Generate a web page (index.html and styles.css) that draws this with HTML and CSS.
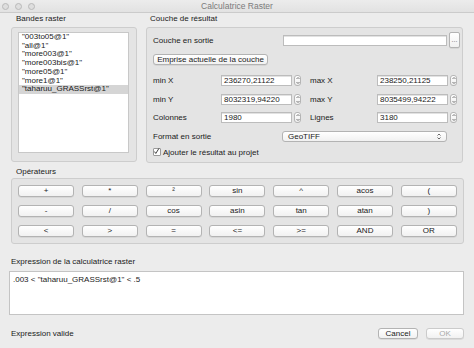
FILE: index.html
```html
<!DOCTYPE html>
<html lang="fr">
<head>
    <meta charset="UTF-8">
    <title>Calculatrice Raster</title>
    <link rel="stylesheet" href="styles.css">
</head>
<body>

<div class="titlebar">
    <div class="lights">
        <span class="light"></span>
        <span class="light"></span>
        <span class="light"></span>
    </div>
    <div class="title">Calculatrice Raster</div>
</div>

<div class="content">
    <div class="top">
        <!-- Bandes raster -->
        <section class="group bands">
            <div class="group-title">Bandes raster</div>
            <div class="group-box">
                <ul class="band-list">
                    <li>"003to05@1"</li>
                    <li>"all@1"</li>
                    <li>"more003@1"</li>
                    <li>"more003bis@1"</li>
                    <li>"more05@1"</li>
                    <li>"more1@1"</li>
                    <li class="selected">"taharuu_GRASSrst@1"</li>
                </ul>
            </div>
        </section>

        <!-- Couche de résultat -->
        <section class="group result">
            <div class="group-title">Couche de résultat</div>
            <div class="group-box">
                <div class="out-row">
                    <span class="lbl">Couche en sortie</span>
                    <span class="field out-field"></span>
                    <button class="btn dots">...</button>
                </div>
                <button class="btn extent">Emprise actuelle de la couche</button>

                <div class="num-row first">
                    <span class="lbl">min X</span>
                    <span class="field num">236270,21122</span>
                    <span class="spin"><svg width="6" height="11" viewBox="0 0 6 11"><path d="M1.5 4 L3 2.5 L4.5 4 M1.5 7 L3 8.5 L4.5 7" fill="none" stroke="#555" stroke-width="0.8"/></svg></span>
                    <span class="lbl lbl2">max X</span>
                    <span class="field num">238250,21125</span>
                    <span class="spin"><svg width="6" height="11" viewBox="0 0 6 11"><path d="M1.5 4 L3 2.5 L4.5 4 M1.5 7 L3 8.5 L4.5 7" fill="none" stroke="#555" stroke-width="0.8"/></svg></span>
                </div>
                <div class="num-row">
                    <span class="lbl">min Y</span>
                    <span class="field num">8032319,94220</span>
                    <span class="spin"><svg width="6" height="11" viewBox="0 0 6 11"><path d="M1.5 4 L3 2.5 L4.5 4 M1.5 7 L3 8.5 L4.5 7" fill="none" stroke="#555" stroke-width="0.8"/></svg></span>
                    <span class="lbl lbl2">max Y</span>
                    <span class="field num">8035499,94222</span>
                    <span class="spin"><svg width="6" height="11" viewBox="0 0 6 11"><path d="M1.5 4 L3 2.5 L4.5 4 M1.5 7 L3 8.5 L4.5 7" fill="none" stroke="#555" stroke-width="0.8"/></svg></span>
                </div>
                <div class="num-row">
                    <span class="lbl">Colonnes</span>
                    <span class="field num">1980</span>
                    <span class="spin"><svg width="6" height="11" viewBox="0 0 6 11"><path d="M1.5 4 L3 2.5 L4.5 4 M1.5 7 L3 8.5 L4.5 7" fill="none" stroke="#555" stroke-width="0.8"/></svg></span>
                    <span class="lbl lbl2">Lignes</span>
                    <span class="field num">3180</span>
                    <span class="spin"><svg width="6" height="11" viewBox="0 0 6 11"><path d="M1.5 4 L3 2.5 L4.5 4 M1.5 7 L3 8.5 L4.5 7" fill="none" stroke="#555" stroke-width="0.8"/></svg></span>
                </div>

                <div class="format-row">
                    <span class="lbl fmt-lbl">Format en sortie</span>
                    <span class="combo">
                        GeoTIFF
                        <svg width="6" height="9" viewBox="0 0 6 9"><path d="M1.5 3.5 L3 2 L4.5 3.5 M1.5 5.5 L3 7 L4.5 5.5" fill="none" stroke="#444" stroke-width="0.8"/></svg>
                    </span>
                </div>

                <div class="check-row">
                    <span class="checkbox"><svg width="9" height="9" viewBox="0 0 9 9"><path d="M1.8 4.6 L3.6 7 L7.6 0.6" fill="none" stroke="#222" stroke-width="1.1"/></svg></span>
                    <span>Ajouter le résultat au projet</span>
                </div>
            </div>
        </section>
    </div>

    <!-- Opérateurs -->
    <section class="group ops">
        <div class="group-title">Opérateurs</div>
        <div class="group-box ops-grid">
            <button class="btn op">+</button>
            <button class="btn op">*</button>
            <button class="btn op">²</button>
            <button class="btn op">sin</button>
            <button class="btn op">^</button>
            <button class="btn op">acos</button>
            <button class="btn op">(</button>
            <button class="btn op">-</button>
            <button class="btn op">/</button>
            <button class="btn op">cos</button>
            <button class="btn op">asin</button>
            <button class="btn op">tan</button>
            <button class="btn op">atan</button>
            <button class="btn op">)</button>
            <button class="btn op">&lt;</button>
            <button class="btn op">&gt;</button>
            <button class="btn op">=</button>
            <button class="btn op">&lt;=</button>
            <button class="btn op">&gt;=</button>
            <button class="btn op">AND</button>
            <button class="btn op">OR</button>
        </div>
    </section>

    <!-- Expression -->
    <section class="expr">
        <div class="expr-title">Expression de la calculatrice raster</div>
        <div class="expr-box">.003 &lt; "taharuu_GRASSrst@1" &lt; .5</div>
    </section>

    <div class="footer">
        <span class="status">Expression valide</span>
        <div class="actions">
            <button class="btn cancel">Cancel</button>
            <button class="btn ok" disabled>OK</button>
        </div>
    </div>
</div>

</body>
</html>
```

FILE: styles.css
```css
body {
    margin: 0;
    background-color: #ececec;
    font-family: 'Liberation Sans', Arial, sans-serif;
    font-size: 8px;
    color: #1a1a1a;
    width: 474px;
    height: 348px;
    overflow: hidden;
}

/* Title bar */
.titlebar {
    position: relative;
    height: 12px;
    border-bottom: 1px solid #cbcbcb;
    background: linear-gradient(#ececec, #e2e2e2);
    display: flex;
    align-items: center;
    justify-content: center;
}

.lights {
    position: absolute;
    left: 2px;
    top: 3px;
    display: flex;
    gap: 6px;
}

.light {
    width: 5px;
    height: 5px;
    border-radius: 50%;
    border: 1px solid #b9b9b9;
    background-color: #dedede;
}

.title {
    color: #7b7b7b;
    font-size: 8.5px;
}

.content {
    padding: 1px 10px 0 11px;
}

/* Group boxes */
.top {
    display: flex;
    gap: 9px;
}

.group-title {
    line-height: 10px;
    padding-left: 5px;
    margin-bottom: 3px;
}

.group-box {
    border: 1px solid #cdcdcd;
    border-radius: 3px;
    background-color: #e4e4e4;
    box-sizing: border-box;
}

.bands {
    width: 126px;
}

.bands .group-box {
    height: 135px;
    padding: 4px 7px 6px 6px;
}

.band-list {
    list-style: none;
    margin: 0;
    padding: 0;
    height: 121px;
    background-color: white;
    border: 1px solid #c8c8c8;
    box-sizing: border-box;
}

.band-list li {
    line-height: 8.7px;
    padding-left: 3px;
}

.band-list li.selected {
    background-color: #d5d5d5;
}

.result {
    width: 317px;
}

.result .group-title {
    padding-left: 4px;
}

.result .group-box {
    height: 136px;
    padding: 4px 0 0 6px;
}

.lbl {
    display: inline-block;
    width: 68px;
}

.field {
    display: inline-block;
    box-sizing: border-box;
    height: 11px;
    line-height: 9px;
    background-color: white;
    border: 1px solid #bcbcbc;
    box-shadow: inset 0 1px 0 #e2e2e2;
    padding-left: 2px;
}

.out-row {
    display: flex;
    align-items: center;
    height: 16px;
}

.out-row .lbl {
    width: 130px;
}

.out-field {
    width: 164px;
}

.btn {
    font-family: 'Liberation Sans', Arial, sans-serif;
    font-size: 8px;
    color: #1a1a1a;
    background: linear-gradient(#ffffff, #f1f1f1);
    border: 1px solid #b3b3b3;
    border-radius: 3px;
    padding: 0;
    box-sizing: border-box;
    box-shadow: 0 0.5px 0 #c8c8c8;
}

.dots {
    width: 11px;
    height: 16px;
    margin-left: 2px;
    border-radius: 2px;
    font-size: 7px;
    color: #666;
    line-height: 12px;
}

.extent {
    display: block;
    width: 115px;
    height: 11px;
    margin-top: 6px;
    line-height: 9px;
}

.num-row {
    display: flex;
    align-items: center;
    height: 11px;
    margin-top: 7.5px;
}

.num-row.first {
    margin-top: 10px;
}

.num {
    width: 71px;
}

.spin {
    display: inline-flex;
    box-sizing: border-box;
    width: 7px;
    height: 11px;
    margin-left: 2px;
    border: 1px solid #b5b5b5;
    border-radius: 3px;
    background: linear-gradient(#ffffff, #eeeeee);
    align-items: center;
    justify-content: center;
}

.spin svg {
    flex: none;
}

.lbl2 {
    width: 67px;
    margin-left: 9px;
}

.format-row {
    display: flex;
    align-items: center;
    height: 11px;
    margin-top: 8px;
}

.fmt-lbl {
    width: 129px;
}

.combo {
    display: flex;
    align-items: center;
    justify-content: space-between;
    box-sizing: border-box;
    width: 165px;
    height: 11px;
    padding: 0 4px 0 5px;
    background: linear-gradient(#ffffff, #f1f1f1);
    border: 1px solid #b3b3b3;
    border-radius: 3px;
}

.check-row {
    display: flex;
    align-items: center;
    gap: 2px;
    height: 10px;
    margin-top: 5px;
}

.checkbox {
    display: inline-flex;
    box-sizing: border-box;
    width: 8px;
    height: 8px;
    border: 1px solid #9a9a9a;
    border-radius: 1px;
    background-color: white;
    overflow: visible;
}

.checkbox svg {
    margin: -2px 0 0 -1px;
}

/* Operators */
.ops {
    margin-top: 4px;
    width: 453px;
}

.ops .group-title {
    margin-bottom: 1px;
}

.ops-grid {
    display: grid;
    grid-template-columns: repeat(7, 56px);
    grid-auto-rows: 12px;
    column-gap: 7.8px;
    row-gap: 8px;
    padding: 6px 0 6px 6px;
}

.op {
    height: 12px;
    line-height: 10px;
}

/* Expression */
.expr {
    margin-top: 13px;
    margin-left: -2px;
}

.expr-title {
    line-height: 10px;
    padding-left: 2px;
    margin-bottom: 4px;
}

.expr-box {
    box-sizing: border-box;
    width: 455px;
    height: 44px;
    background-color: white;
    border: 1px solid #c4c4c4;
    padding: 3px 0 0 3px;
    line-height: 9px;
}

.footer {
    display: flex;
    justify-content: space-between;
    align-items: center;
    margin-top: 13px;
    height: 11px;
}

.actions {
    display: flex;
    gap: 8px;
}

.cancel {
    width: 40px;
    height: 11px;
    line-height: 9px;
}

.ok {
    width: 38px;
    height: 11px;
    line-height: 9px;
    color: #a9a9a9;
    border-color: #cbcbcb;
}
```
